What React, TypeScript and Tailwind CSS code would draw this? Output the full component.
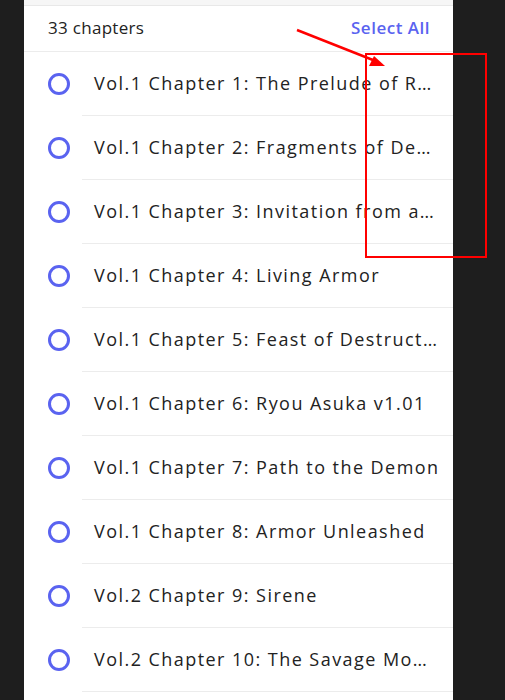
import React from 'react'

// titles as shown in the list (already clipped with an ellipsis)
const chapters = [
  'Vol.1 Chapter 1: The Prelude of R…',
  'Vol.1 Chapter 2: Fragments of De…',
  'Vol.1 Chapter 3: Invitation from a…',
  'Vol.1 Chapter 4: Living Armor',
  'Vol.1 Chapter 5: Feast of Destruct…',
  'Vol.1 Chapter 6: Ryou Asuka v1.01',
  'Vol.1 Chapter 7: Path to the Demon',
  'Vol.1 Chapter 8: Armor Unleashed',
  'Vol.2 Chapter 9: Sirene',
  'Vol.2 Chapter 10: The Savage Mo…',
]

const App: React.FC = () => {
  return (
    <div className="relative h-[700px] w-[505px] overflow-hidden bg-[#1e1e1e]" style={{ fontFamily: '"Open Sans", sans-serif' }}>
      <div className="ml-[24px] h-full w-[429px] bg-white">
        <div className="h-[6px] border-b border-[#e8e8e8] bg-[#f6f6f6]" />
        <div className="flex h-[46px] items-center justify-between border-b border-[#ececec] pl-[24px] pr-[23px]">
          <span className="-mt-[2px] text-[17px] tracking-[0.3px] text-[#222]">33 chapters</span>
          <button className="-mt-[2px] text-[17px] font-semibold tracking-[0.5px] text-[#5a63f0]">Select All</button>
        </div>
        {chapters.map((title) => (
          <div key={title} className="flex h-[64px] items-center pl-[24px]">
            <div className="h-[22px] w-[22px] shrink-0 rounded-full border-[3px] border-[#5a63f0]" />
            <div className="ml-[12px] flex h-full min-w-0 flex-1 items-center border-b border-[#ececec] pl-[12px]">
              <span className="whitespace-nowrap text-[18px] tracking-[1.45px] text-[#222]">{title}</span>
            </div>
          </div>
        ))}
      </div>

      <svg className="pointer-events-none absolute left-0 top-0" width="505" height="700">
        <rect x="366" y="54" width="120" height="203" fill="none" stroke="#ff0000" strokeWidth="2" />
        <line x1="297" y1="30" x2="378" y2="62" stroke="#ff0000" strokeWidth="2.5" />
        <polygon points="385,66 369,66 374,56" fill="#ff0000" />
      </svg>
    </div>
  )
}

export default App
